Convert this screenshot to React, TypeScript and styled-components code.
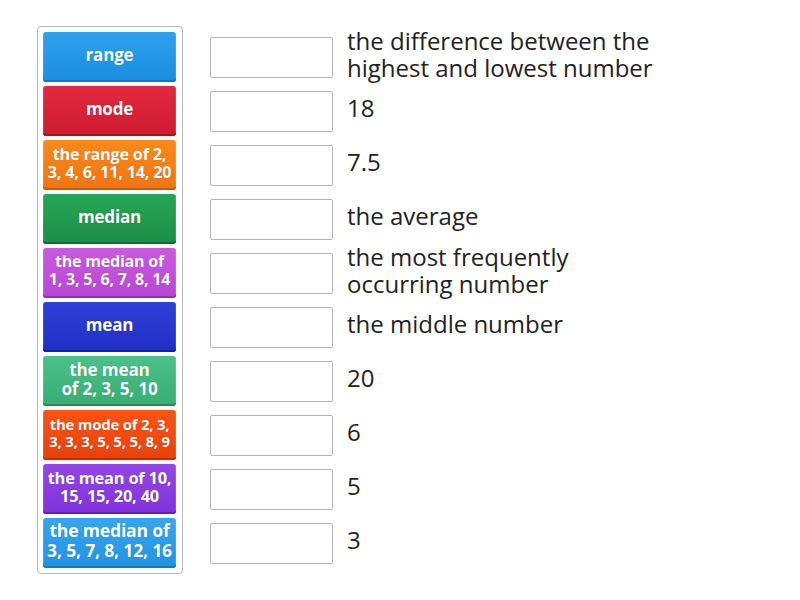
import React from "react";
import styled, { createGlobalStyle } from "styled-components";

const Global = createGlobalStyle`
  html, body { margin: 0; padding: 0; background: #ffffff; }
  body { font-family: "Open Sans", "DejaVu Sans", sans-serif; }
`;

const Page = styled.div`
  display: flex;
  align-items: flex-start;
  padding: 26px 0 0 37px;
  gap: 27px;
`;

const TileTray = styled.div`
  display: flex;
  flex-direction: column;
  gap: 4px;
  padding: 5px 6px 5px 5px;
  border: 1px solid #b9b9b9;
  border-radius: 4px;
  width: 133px;
`;

const Tile = styled.div<{ $c1: string; $c2: string; $edge: string; $size: number }>`
  height: 50px;
  box-sizing: border-box;
  display: flex;
  align-items: center;
  justify-content: center;
  text-align: center;
  border-radius: 3px;
  background: linear-gradient(to bottom, ${(p) => p.$c1}, ${(p) => p.$c2});
  box-shadow: inset 0 -2px 0 ${(p) => p.$edge}, inset 1px 0 0 rgba(255,255,255,0.12), inset -1px 0 0 rgba(255,255,255,0.12);
  color: #ffffff;
  font-weight: 700;
  font-size: ${(p) => p.$size}px;
  line-height: 1.12;
  letter-spacing: -0.2px;
  padding: 0 1px 4px;
  white-space: nowrap;
  text-shadow: 0 0 1px rgba(0, 0, 0, 0.25);
`;

const Answers = styled.div`
  display: flex;
  flex-direction: column;
  gap: 4px;
  padding-top: 6px;
`;

const Row = styled.div`
  height: 50px;
  display: flex;
  align-items: center;
  gap: 14px;
`;

const Slot = styled.div`
  width: 123px;
  height: 41px;
  box-sizing: border-box;
  border: 1px solid #b5b5b5;
  border-radius: 2px;
  background: #ffffff;
  flex: none;
`;

const Clue = styled.div`
  color: #222222;
  font-size: 24px;
  line-height: 27px;
  margin-top: -7px;
`;

const tiles: { t: React.ReactNode; s: number; c1: string; c2: string; e: string }[] = [
  { t: "range", s: 17, c1: "#2ea2ee", c2: "#1b8ce0", e: "#1474c0" },
  { t: "mode", s: 17, c1: "#e2293f", c2: "#cf1a30", e: "#a8121f" },
  { t: <>the range of 2,<br />3, 4, 6, 11, 14, 20</>, s: 16.2, c1: "#fb8a1a", c2: "#f07410", e: "#c85a08" },
  { t: "median", s: 17, c1: "#27a655", c2: "#1b8e45", e: "#136e34" },
  { t: <>the median of<br />1, 3, 5, 6, 7, 8, 14</>, s: 16, c1: "#ca5ae0", c2: "#b845d4", e: "#9430ac" },
  { t: "mean", s: 17, c1: "#2f3fd8", c2: "#2030c4", e: "#1420a0" },
  { t: <>the mean<br />of 2, 3, 5, 10</>, s: 17.2, c1: "#4cc088", c2: "#36ae74", e: "#258c5a" },
  { t: <>the mode of 2, 3,<br />3, 3, 3, 5, 5, 5, 8, 9</>, s: 14.9, c1: "#fa5418", c2: "#ea4008", e: "#c03004" },
  { t: <>the mean of 10,<br />15, 15, 20, 40</>, s: 16.4, c1: "#9446e8", c2: "#8032dc", e: "#6422b4" },
  { t: <>the median of<br />3, 5, 7, 8, 12, 16</>, s: 17.6, c1: "#36a6f0", c2: "#2392e2", e: "#1878c0" },
];

const clues: React.ReactNode[] = [
  <>the difference between the<br />highest and lowest number</>,
  "18",
  "7.5",
  "the average",
  <>the most frequently<br />occurring number</>,
  "the middle number",
  "20",
  "6",
  "5",
  "3",
];

export default function App() {
  return (
    <>
      <Global />
      <Page>
        <TileTray>
          {tiles.map((x, i) => (
            <Tile key={i} $size={x.s} $c1={x.c1} $c2={x.c2} $edge={x.e}>
              <span>{x.t}</span>
            </Tile>
          ))}
        </TileTray>
        <Answers>
          {clues.map((c, i) => (
            <Row key={i}>
              <Slot />
              <Clue>{c}</Clue>
            </Row>
          ))}
        </Answers>
      </Page>
    </>
  );
}
